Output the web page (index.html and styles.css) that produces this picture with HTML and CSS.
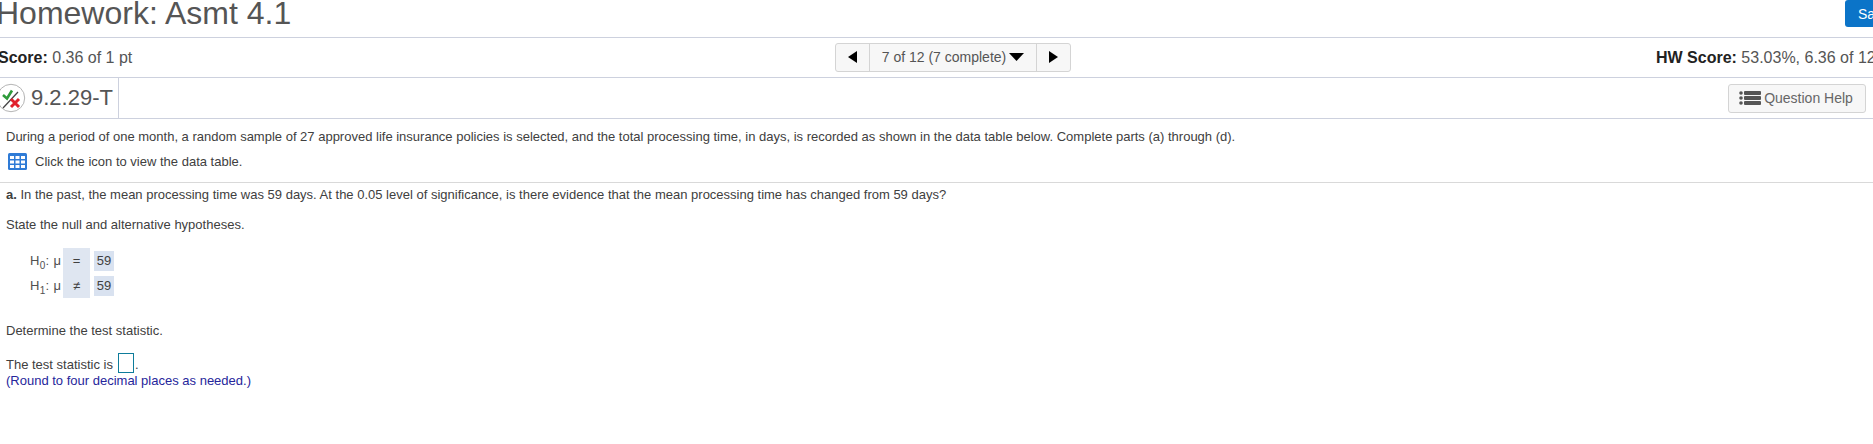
FILE: index.html
```html
<!DOCTYPE html>
<html lang="en">
<head>
<meta charset="utf-8">
<title>Homework: Asmt 4.1</title>
<link rel="stylesheet" href="styles.css">
</head>
<body>
<div class="page">
  <header class="title-bar">
    <h1 class="title">Homework: Asmt 4.1</h1>
    <button class="save">Save</button>
  </header>
  <div class="score-bar">
    <div class="score"><b>Score:</b> 0.36 of 1 pt</div>
    <div class="pager">
      <span class="pager-btn"><svg width="9" height="12" viewBox="0 0 9 12"><path d="M9 0v12L0 6z"/></svg></span>
      <span class="pager-mid">7 of 12 (7 complete)<svg class="caret" width="15" height="8" viewBox="0 0 15 8"><path d="M0 0h15L7.5 8z"/></svg></span>
      <span class="pager-btn"><svg width="9" height="12" viewBox="0 0 9 12"><path d="M0 0v12l9-6z"/></svg></span>
    </div>
    <div class="hw-score"><b>HW Score:</b> 53.03%, 6.36 of 12 pts</div>
  </div>
  <div class="question-bar">
    <div class="qid">
      <svg class="status" width="28" height="30" viewBox="0 0 28 30">
        <circle cx="13" cy="15" r="13.7" fill="#fff" stroke="#b5b5b5" stroke-width="1"/>
        <path d="M5 25 20 9" stroke="#444" stroke-width="1.2" fill="none"/>
        <path d="M5 12l4 3.5 5-8" stroke="#2e9a3a" stroke-width="2.6" fill="none"/>
        <path d="M13 16l8 8M21 16l-8 8" stroke="#e0202c" stroke-width="3" fill="none"/>
      </svg>
      <span class="qnum">9.2.29-T</span>
    </div>
    <button class="help">
      <svg width="22" height="14" viewBox="0 0 22 14" fill="#555"><circle cx="2" cy="2" r="1.8"/><circle cx="2" cy="7" r="1.8"/><circle cx="2" cy="12" r="1.8"/><rect x="5" y="0" width="17" height="4" rx="1"/><rect x="5" y="5" width="17" height="4" rx="1"/><rect x="5" y="10" width="17" height="4" rx="1"/></svg>
      Question Help
    </button>
  </div>
  <section class="intro">
    <p class="line">During a period of one month, a random sample of 27 approved life insurance policies is selected, and the total processing time, in days, is recorded as shown in the data table below. Complete parts (a) through (d).</p>
    <p class="line table-link">
      <svg width="19" height="17" viewBox="0 0 19 17"><rect width="19" height="17" rx="1.5" fill="#2f7bd6"/><g fill="#fff"><rect x="2" y="3" width="4" height="3"/><rect x="7.5" y="3" width="4" height="3"/><rect x="13" y="3" width="4" height="3"/><rect x="2" y="7.5" width="4" height="3"/><rect x="7.5" y="7.5" width="4" height="3"/><rect x="13" y="7.5" width="4" height="3"/><rect x="2" y="12" width="4" height="3"/><rect x="7.5" y="12" width="4" height="3"/><rect x="13" y="12" width="4" height="3"/></g></svg>
      Click the icon to view the data table.
    </p>
  </section>
  <section class="part">
    <p class="line"><b>a.</b> In the past, the mean processing time was 59 days. At the 0.05 level of significance, is there evidence that the mean processing time has changed from 59 days?</p>
    <p class="line state">State the null and alternative hypotheses.</p>
    <div class="hypotheses">
      <div class="hyp"><span class="hyp-label">H<sub>0</sub>: μ</span><span class="op">=</span><span class="val">59</span></div>
      <div class="hyp"><span class="hyp-label">H<sub>1</sub>: μ</span><span class="op">≠</span><span class="val">59</span></div>
    </div>
    <p class="line determine">Determine the test statistic.</p>
    <p class="line stat">The test statistic is <span class="answer"></span>.</p>
    <p class="line note">(Round to four decimal places as needed.)</p>
  </section>
</div>
</body>
</html>
```

FILE: styles.css
```css
html, body { margin: 0; padding: 0; background: #fff; overflow: hidden; }
body { width: 1873px; height: 444px; font-family: "Liberation Sans", Arial, sans-serif; color: #333; }
.page { width: 1873px; height: 444px; overflow: hidden; }
.title-bar { height: 37px; border-bottom: 1px solid #cdd1de; display: flex; justify-content: space-between; overflow: hidden; }
.title { margin: -8px 0 0 -4px; font-size: 32px; line-height: 42px; font-weight: normal; color: #555; white-space: nowrap; }
.save { width: 60px; height: 27px; margin-right: -32px; border: 0; border-radius: 3px; background: #0b74c8; color: #fff; font: 14px "Liberation Sans", Arial, sans-serif; text-align: left; padding: 0 0 0 13px; flex: none; }
.score-bar { height: 39px; border-bottom: 1px solid #cdd1de; display: grid; grid-template-columns: 835px 236px 1fr; align-items: center; font-size: 16px; color: #555; white-space: nowrap; }
.score-bar b { color: #222; }
.score { margin-left: -2px; }
.pager { height: 29px; display: flex; border: 1px solid #d4d4d4; border-radius: 3px; background: #f7f7f7; box-sizing: border-box; margin-top: -1px; }
.pager-btn { width: 33px; display: flex; align-items: center; justify-content: center; flex: none; }
.pager-mid { flex: 1; border-left: 1px solid #d4d4d4; border-right: 1px solid #d4d4d4; display: flex; align-items: center; justify-content: center; gap: 3px; font-size: 14px; color: #555; }
.hw-score { justify-self: start; margin-left: 585px; }
.question-bar { height: 40px; border-bottom: 1px solid #cdd1de; display: flex; justify-content: space-between; align-items: center; }
.qid { height: 40px; width: 120px; border-right: 1px solid #cdd1de; display: flex; align-items: center; gap: 5px; margin-left: -2px; flex: none; box-sizing: content-box; }
.status { overflow: visible; flex: none; }
.qnum { font-size: 22px; color: #555; }
.help { height: 29px; width: 138px; margin-right: 7px; box-sizing: border-box; border: 1px solid #d4d4d4; border-radius: 3px; background: #f7f7f7; color: #666; font: 14px "Liberation Sans", Arial, sans-serif; display: flex; align-items: center; justify-content: center; gap: 3px; padding: 0 2px 0 0; }
.line { margin: 0; font-size: 13px; line-height: 16px; color: #404040; white-space: nowrap; }
.intro { height: 63px; padding: 0 0 0 6px; border-bottom: 1px solid #d9d9d9; }
.intro .line:first-child { padding-top: 10px; }
.table-link { display: flex; align-items: center; gap: 8px; margin: 8px 0 0 2px; }
.part { padding: 4px 0 0 6px; }
.state { margin-top: 14px; }
.hypotheses { margin: 15px 0 0 24px; }
.hyp { display: flex; align-items: center; height: 25px; }
.hyp-label { width: 33px; font-size: 13px; color: #505050; letter-spacing: .3px; white-space: nowrap; }
.hyp-label sub { font-size: 10px; line-height: 0; }
.op { width: 27px; height: 25px; background: #dfe6f1; display: flex; align-items: center; justify-content: center; font-size: 13px; color: #404040; }
.val { width: 20px; height: 20px; margin-left: 4px; background: #d9e2f0; display: flex; align-items: center; justify-content: center; font-size: 13px; color: #404040; }
.determine { margin-top: 25px; }
.stat { margin-top: 14px; display: flex; align-items: flex-end; }
.answer { width: 14px; height: 18px; border: 1px solid #0e7c9b; margin-left: 5px; margin-right: 1px; }
.note { color: #26269b; }
```
